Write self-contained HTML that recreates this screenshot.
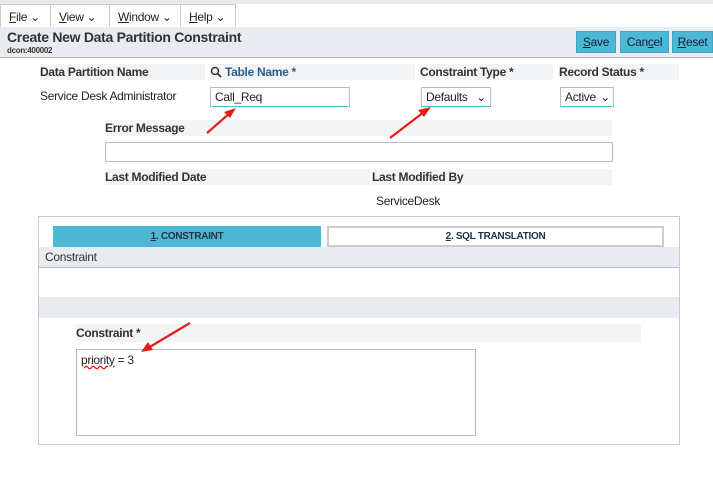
<!DOCTYPE html>
<html><head><style>
body{margin:0;width:713px;height:489px;background:#fff;font-family:"Liberation Sans",sans-serif;font-size:12px;letter-spacing:-0.3px;color:#222;position:relative;overflow:hidden}
.a{position:absolute}
.lbl{position:absolute;background:#f3f4f6;font-weight:bold;font-size:12px;line-height:16px;color:#333}
.inp{position:absolute;border:1px solid #bbb;border-bottom:1px solid #4cb8d6;background:#fff;box-sizing:border-box;font-size:12px;line-height:18px;padding-left:4px}
.btn{position:absolute;top:31px;height:22px;background:#4cb8d6;border:1px solid #3fa6c4;box-sizing:border-box;text-align:center;line-height:20px;font-size:12px;color:#123}
.menu{position:absolute;top:4px;height:23px;border:1px solid #ccc;border-bottom:none;box-sizing:border-box;line-height:24px;padding-left:8px;font-size:12px}
u{text-decoration:underline}
</style></head><body>
<div class="a" style="left:0;top:0;width:713px;height:4px;background:#e8ebee"></div>
<div class="menu" style="left:0;width:51px"><u>F</u>ile ⌄</div>
<div class="menu" style="left:50px;width:60px"><u>V</u>iew ⌄</div>
<div class="menu" style="left:109px;width:72px"><u>W</u>indow ⌄</div>
<div class="menu" style="left:180px;width:56px"><u>H</u>elp ⌄</div>
<div class="a" style="left:0;top:27px;width:713px;height:30px;background:#e8ebef;border-bottom:1px solid #b8bcc2"></div>
<div class="a" style="left:7px;top:29px;font-weight:bold;font-size:14px;color:#333">Create New Data Partition Constraint</div>
<div class="a" style="left:7px;top:46px;font-weight:bold;font-size:8px;color:#333">dcon:400002</div>
<div class="btn" style="left:576px;width:40px"><u>S</u>ave</div>
<div class="btn" style="left:620px;width:49px">Can<u>c</u>el</div>
<div class="btn" style="left:672px;width:41px"><u>R</u>eset</div>

<div class="lbl" style="left:40px;top:64px;width:165px;height:16px">Data Partition Name</div>
<div class="lbl" style="left:210px;top:64px;width:205px;height:16px;color:#2a5d8a"><svg width="12" height="12" style="vertical-align:-2px;margin-right:3px"><circle cx="5" cy="5" r="3.5" fill="none" stroke="#333" stroke-width="1.5"/><line x1="7.5" y1="7.5" x2="11" y2="11" stroke="#333" stroke-width="1.8"/></svg>Table Name *</div>
<div class="lbl" style="left:420px;top:64px;width:133px;height:16px">Constraint Type *</div>
<div class="lbl" style="left:559px;top:64px;width:120px;height:16px">Record Status *</div>
<div class="a" style="left:40px;top:89px">Service Desk Administrator</div>
<div class="inp" style="left:210px;top:87px;width:140px;height:20px">Call_Req</div>
<div class="inp" style="left:421px;top:87px;width:70px;height:20px">Defaults <span style="float:right;margin-right:4px">⌄</span></div>
<div class="inp" style="left:560px;top:87px;width:54px;height:20px">Active <span style="float:right;margin-right:3px">⌄</span></div>

<div class="lbl" style="left:105px;top:120px;width:507px;height:16px">Error Message</div>
<div class="inp" style="left:105px;top:142px;width:508px;height:20px;border-bottom-color:#bbb"></div>
<div class="lbl" style="left:105px;top:169px;width:265px;height:16px">Last Modified Date</div>
<div class="lbl" style="left:372px;top:169px;width:240px;height:16px">Last Modified By</div>
<div class="a" style="left:376px;top:194px">ServiceDesk</div>

<div class="a" style="left:38px;top:216px;width:642px;height:229px;border:1px solid #c8ccd0;box-sizing:border-box"></div>
<div class="a" style="left:53px;top:226px;width:268px;height:22px;background:#4cb8d6;text-align:center;line-height:22px;font-size:10px;font-weight:bold;color:#234"><u>1</u>. CONSTRAINT</div>
<div class="a" style="left:327px;top:226px;width:337px;height:21px;border:2px solid #ccc;box-sizing:border-box;text-align:center;line-height:17px;font-size:10px;font-weight:bold;color:#234"><u>2</u>. SQL TRANSLATION</div>
<div class="a" style="left:39px;top:247px;width:640px;height:21px;background:#e8ebef;border-bottom:1px solid #b8bcc2;line-height:20px;padding-left:6px;box-sizing:border-box;color:#333">Constraint</div>
<div class="a" style="left:39px;top:297px;width:640px;height:21px;background:#e8ebef"></div>
<div class="lbl" style="left:76px;top:324px;width:565px;height:18px;line-height:18px">Constraint *</div>
<div class="a" style="left:76px;top:349px;width:400px;height:87px;border:1px solid #bbb;box-sizing:border-box;padding:3px 4px"><span style="text-decoration:underline wavy red">priority</span> = 3</div>

<svg class="a" style="left:0;top:0" width="713" height="489">
<g stroke="#e51c1c" stroke-width="2.2" fill="#e51c1c">
<line x1="207" y1="133" x2="230" y2="113"/><polygon points="236,108 224,112 230,118" stroke="none"/>
<line x1="390" y1="138" x2="424" y2="112"/><polygon points="431,107 418,110 424,117" stroke="none"/>
<line x1="190" y1="323" x2="148" y2="348"/><polygon points="141,352 148,342 153,350" stroke="none"/>
</g></svg>
</body></html>
